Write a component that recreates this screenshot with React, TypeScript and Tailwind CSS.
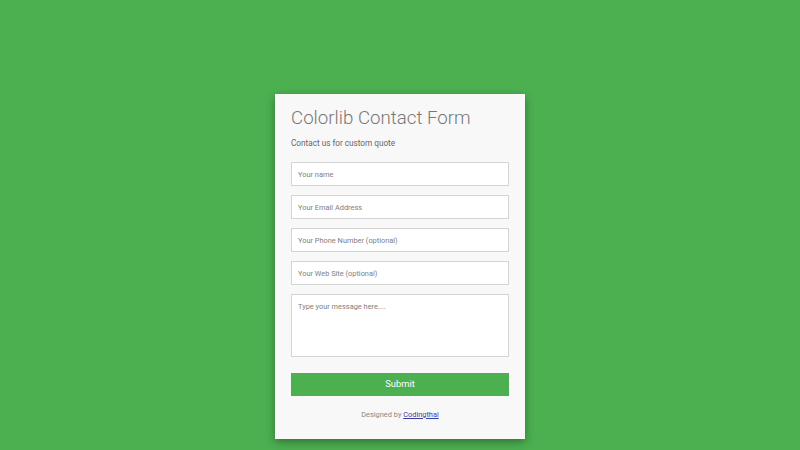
export default function App() {
  const fields = [
    "Your name",
    "Your Email Address",
    "Your Phone Number (optional)",
    "Your Web Site (optional)",
  ];

  return (
    <div className="w-[800px] h-[450px] bg-[#4caf50] flex justify-center pt-[94px] overflow-hidden font-['Roboto',sans-serif]">
      <form className="w-[250px] h-[345px] bg-[#f8f8f8] shadow-[0_3px_8px_rgba(0,0,0,0.35)] px-4 pt-[10px] flex flex-col">
        <h1 className="text-[18.7px] font-light text-[#777] leading-[28px]">Colorlib Contact Form</h1>
        <p className="text-[8.2px] text-[#666] mt-[5px] leading-[12px]">Contact us for custom quote</p>
        <div className="flex flex-col gap-[9px] mt-[13px]">
          {fields.map((f) => (
            <input
              key={f}
              placeholder={f}
              className="h-[24px] w-full bg-white border border-[#d4d4d4] px-[6px] text-[7.4px] placeholder:text-[#808080] outline-none"
            />
          ))}
          <textarea
            placeholder="Type your message here...."
            className="h-[63px] w-full bg-white border border-[#d4d4d4] px-[6px] pt-[6px] text-[7.4px] placeholder:text-[#808080] outline-none resize-none"
          />
        </div>
        <button
          type="button"
          className="mt-[16px] h-[23px] w-full bg-[#4caf50] text-white text-[9.4px]"
        >
          Submit
        </button>
        <p className="text-center text-[7.4px] text-[#888] mt-[13px] leading-[12px]">
          Designed by{" "}
          <a href="#" className="text-[#3b3ba8] underline">
            Codingthai
          </a>
        </p>
      </form>
    </div>
  );
}
